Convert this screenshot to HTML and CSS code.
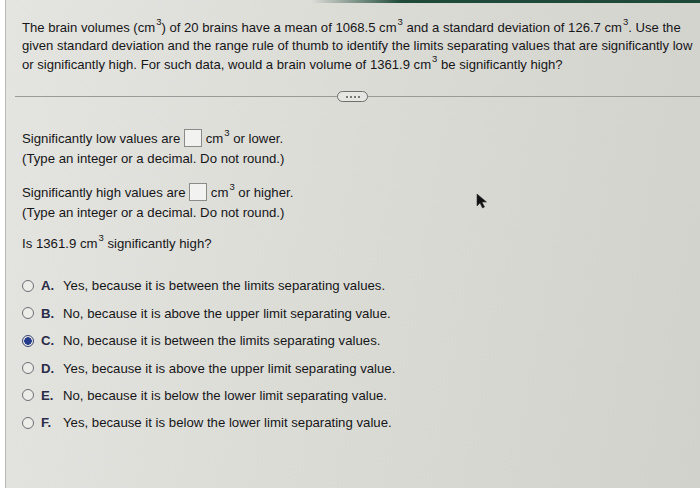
FILE: index.html
```html
<!DOCTYPE html>
<html>
<head>
<meta charset="utf-8">
<link rel="stylesheet" href="styles.css">
</head>
<body>
<div class="page">
  <div class="topbar"></div>
  <div class="content">
    <p class="question"><span class="qline">The brain volumes (cm<sup>3</sup>) of 20 brains have a mean of 1068.5 cm<sup>3</sup> and a standard deviation of 126.7 cm<sup>3</sup>. Use the</span><span class="qline">given standard deviation and the range rule of thumb to identify the limits separating values that are significantly low</span><span class="qline">or significantly high. For such data, would a brain volume of 1361.9 cm<sup>3</sup> be significantly high?</span></p>
  </div>
  <div class="divider">
    <span class="pill"><span class="dot"></span><span class="dot"></span><span class="dot"></span><span class="dot"></span></span>
  </div>
  <div class="answers">
    <div class="block">
      <div class="line">Significantly low values are <span class="box"></span> cm<sup>3</sup> or lower.</div>
      <div class="line">(Type an integer or a decimal. Do not round.)</div>
    </div>
    <div class="block second">
      <div class="line">Significantly high values are <span class="box"></span> cm<sup>3</sup> or higher.</div>
      <div class="line">(Type an integer or a decimal. Do not round.)</div>
    </div>
    <div class="block">
      <div class="line">Is 1361.9 cm<sup>3</sup> significantly high?</div>
    </div>
    <ul class="options">
      <li><span class="radio"></span><span class="letter">A.</span><span>Yes, because it is between the limits separating values.</span></li>
      <li><span class="radio"></span><span class="letter">B.</span><span>No, because it is above the upper limit separating value.</span></li>
      <li><span class="radio checked"></span><span class="letter">C.</span><span>No, because it is between the limits separating values.</span></li>
      <li><span class="radio"></span><span class="letter">D.</span><span>Yes, because it is above the upper limit separating value.</span></li>
      <li><span class="radio"></span><span class="letter">E.</span><span>No, because it is below the lower limit separating value.</span></li>
      <li><span class="radio"></span><span class="letter">F.</span><span>Yes, because it is below the lower limit separating value.</span></li>
    </ul>
  </div>
  <svg class="cursor" width="12" height="16" viewBox="0 0 12 16"><path d="M1 1 L1 13 L4 10 L6.5 15 L8.5 14 L6 9 L10.5 9 Z" fill="#111" stroke="#333" stroke-width="0.6"/></svg>
</div>
</body>
</html>
```

FILE: styles.css
```css
html, body {
  margin: 0;
  padding: 0;
}
body {
  width: 700px;
  height: 488px;
  overflow: hidden;
  font-family: "Liberation Sans", Arial, sans-serif;
  color: #161618;
}
.page {
  position: relative;
  width: 695px;
  height: 488px;
  background: linear-gradient(100deg, #e4e4e0 0%, #dcdcd7 45%, #d2d2cd 100%);
  border-left: 1px solid #b8b8b4;
  margin-left: 5px;
  box-sizing: border-box;
}
.topbar {
  height: 3px;
  background: linear-gradient(90deg, rgba(31,74,58,0) 0%, rgba(31,74,58,0) 44%, #1f4a3a 57%, #1e4a3c 100%);
}
.content {
  padding: 16px 0 0 16px;
}
.question {
  margin: 0;
  font-size: 13.1px;
  line-height: 18px;
}
.qline {
  display: block;
  height: 18.4px;
  white-space: nowrap;
}
sup {
  font-size: 9.5px;
  line-height: 0;
  position: relative;
  top: -7px;
  vertical-align: baseline;
  margin-left: 1px;
}
.divider {
  margin: 22px 0 0 9px;
  height: 1px;
  background: #9a9a96;
  position: relative;
}
.pill {
  position: absolute;
  left: 322px;
  top: -5px;
  width: 29px;
  height: 9px;
  border: 1px solid #6e6e6c;
  border-radius: 6px;
  background: #e6e6e2;
  display: flex;
  align-items: center;
  justify-content: center;
  gap: 2px;
}
.dot {
  width: 2px;
  height: 2px;
  background: #555;
  border-radius: 1px;
}
.answers {
  padding: 32px 0 0 16px;
  font-size: 13.2px;
}
.block {
  margin-bottom: 14px;
}
.block.second {
  margin-bottom: 11px;
}
.line {
  line-height: 20px;
  height: 20px;
  white-space: nowrap;
}
.box {
  display: inline-block;
  vertical-align: middle;
  width: 16px;
  height: 16px;
  border: 1px solid #8a8a88;
  background: #f2f2f0;
  margin: -3px 0 0 0;
}
.options {
  list-style: none;
  margin: 18px 0 0 0;
  padding: 0;
}
.options li {
  display: flex;
  align-items: center;
  height: 27.4px;
}
.radio {
  width: 10px;
  height: 10px;
  border: 1.5px solid #6d6f74;
  border-radius: 50%;
  background: #ecece9;
  margin-right: 7px;
  box-sizing: content-box;
  flex: none;
}
.radio.checked {
  border-color: #3a4470;
  background: radial-gradient(circle, #243a8a 0, #243a8a 3.5px, #e8e8e6 4px);
}
.letter {
  font-weight: bold;
  color: #2a2c48;
  width: 22px;
  flex: none;
}
.cursor {
  position: absolute;
  left: 470px;
  top: 193px;
}
```
